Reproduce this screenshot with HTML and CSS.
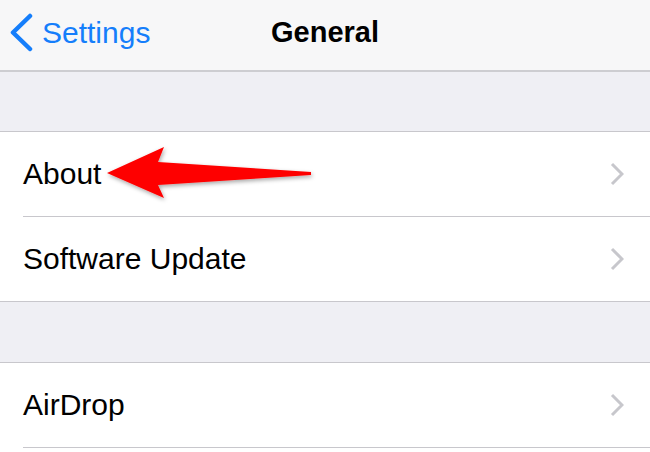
FILE: index.html
```html
<!DOCTYPE html>
<html>
<head>
<meta charset="utf-8">
<link rel="stylesheet" href="styles.css">
</head>
<body>
<div class="screen">
  <header class="navbar">
    <div class="back">
      <svg class="back-icon" width="26" height="40" viewBox="0 0 26 40">
        <path d="M22 3 L5 19.5 L22 36" fill="none" stroke="#157efb" stroke-width="4.5" stroke-linecap="round" stroke-linejoin="round"/>
      </svg>
      <span class="back-label">Settings</span>
    </div>
    <h1 class="title">General</h1>
  </header>
  <div class="gap gap-first"></div>
  <section class="group">
    <div class="row">
      <span class="label">About</span>
      <svg class="chev" width="14" height="24" viewBox="0 0 14 24"><path d="M2 2 L12 12 L2 22" fill="none" stroke="#c7c7cc" stroke-width="3"/></svg>
    </div>
    <div class="row">
      <span class="label">Software Update</span>
      <svg class="chev" width="14" height="24" viewBox="0 0 14 24"><path d="M2 2 L12 12 L2 22" fill="none" stroke="#c7c7cc" stroke-width="3"/></svg>
    </div>
  </section>
  <div class="gap"></div>
  <section class="group">
    <div class="row">
      <span class="label">AirDrop</span>
      <svg class="chev" width="14" height="24" viewBox="0 0 14 24"><path d="M2 2 L12 12 L2 22" fill="none" stroke="#c7c7cc" stroke-width="3"/></svg>
    </div>
    <div class="row"></div>
  </section>
  <svg class="arrow" width="230" height="70" viewBox="100 140 230 70">
    <defs>
      <filter id="sh" x="-10%" y="-30%" width="130%" height="170%">
        <feDropShadow dx="1" dy="2" stdDeviation="2" flood-color="#000" flood-opacity="0.35"/>
      </filter>
    </defs>
    <path d="M107 173 L164 147 L158 162 L311 172 L311 175 L158 185 L164 198 Z" fill="#fe0000" filter="url(#sh)"/>
  </svg>
</div>
</body>
</html>
```
FILE: styles.css
```css
* { box-sizing: border-box; }
html, body { margin: 0; padding: 0; }
body {
  width: 650px;
  height: 452px;
  overflow: hidden;
  background: #efeff4;
  font-family: "Liberation Sans", Arial, sans-serif;
}
.screen {
  position: relative;
  width: 650px;
  height: 452px;
  overflow: hidden;
}
.navbar {
  position: relative;
  height: 72px;
  background: #f7f7f8;
  border-bottom: 2px solid #cdcdd1;
  display: flex;
  align-items: center;
  justify-content: center;
}
.back {
  position: absolute;
  left: 8px;
  top: 12px;
  display: flex;
  align-items: center;
  height: 42px;
}
.back-icon { display: block; margin-right: 8px; }
.back-label {
  color: #157efb;
  font-size: 30px;
  line-height: 42px;
}
.title {
  margin: 0;
  font-size: 29px;
  font-weight: bold;
  color: #000;
  margin-top: -5px;
}
.gap {
  height: 60px;
  background: #efeff4;
}
.gap-first { height: 59px; }
.group {
  background: #fff;
  border-top: 1px solid #c8c7cc;
  border-bottom: 1px solid #c8c7cc;
}
.row {
  height: 85px;
  margin-left: 23px;
  padding-right: 26px;
  display: flex;
  align-items: center;
  justify-content: space-between;
  border-bottom: 1px solid #c8c7cc;
}
.row:last-child { border-bottom: none; height: 84px; }
.label {
  font-size: 30px;
  color: #000;
}
.chev { display: block; }
.arrow {
  position: absolute;
  left: 100px;
  top: 140px;
}
```
